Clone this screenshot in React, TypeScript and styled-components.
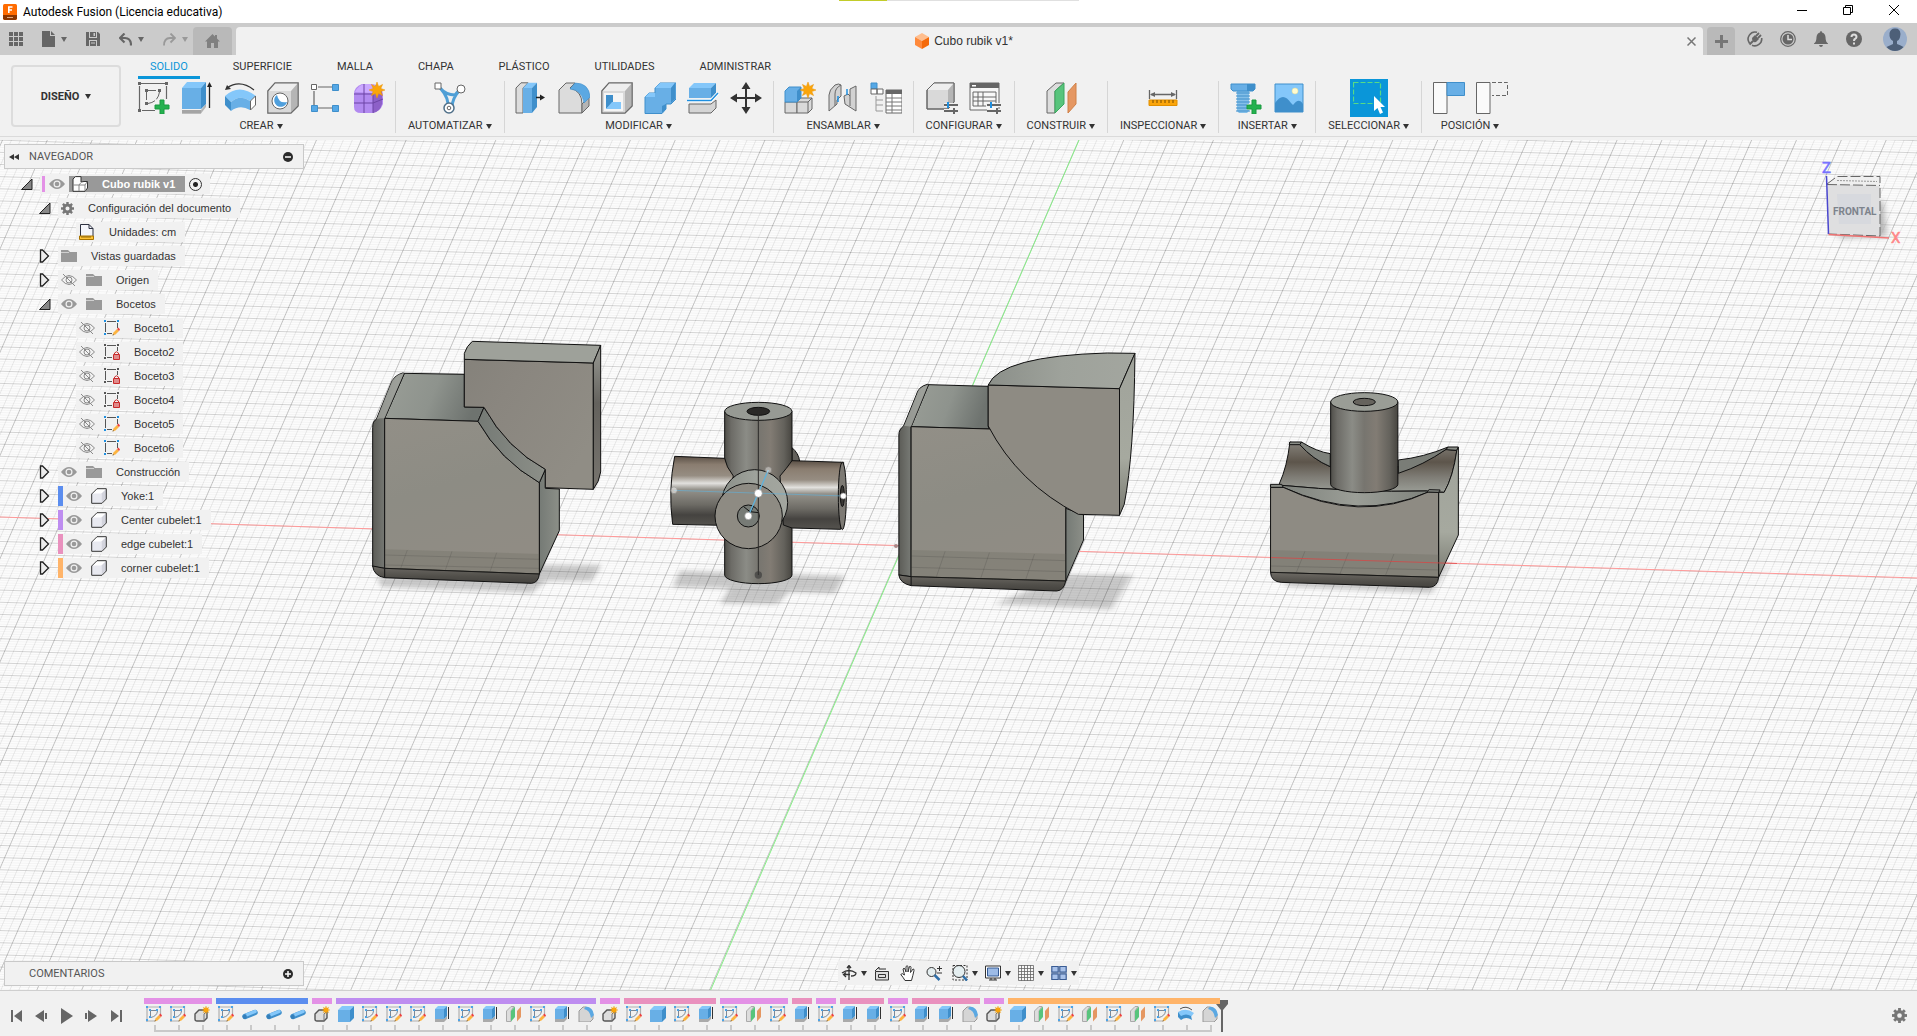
import React from "react";
import styled, { createGlobalStyle, css } from "styled-components";

const GlobalStyle = createGlobalStyle`
  * { box-sizing: border-box; }
  body { margin: 0; background: #f1f1f1; font-family: Roboto, "Liberation Sans", sans-serif; font-size: 11px; color: #333; }
  button, input { font: inherit; color: inherit; margin: 0; }
  button { background: none; border: 0; padding: 0; cursor: pointer; display: inline-flex; align-items: center; justify-content: center; }
  svg { display: block; flex: none; }
  ul { list-style: none; margin: 0; padding: 0; }
`;

const Shell = styled.div`
  display: flex;
  flex-direction: column;
  height: 100vh;
  overflow: hidden;
`;

const Caret = styled.span<{ $tone?: string }>`
  border: 3px solid transparent;
  border-top: 5px solid ${(p) => p.$tone ?? "#333"};
  border-bottom: 0;
  flex: none;
`;

/* ---------- window title bar ---------- */

const TitleBar = styled.header`
  display: grid;
  grid-template-columns: 1fr auto 1fr;
  height: 23px;
  background: #fff;
`;
const AppName = styled.div`
  display: flex;
  align-items: center;
  gap: 6px;
  padding-left: 3px;
  font: 12px Roboto, "Noto Sans", sans-serif;
  color: #000;
`;
const Progress = styled.div`
  display: flex;
  height: 1px;
  width: 240px;
  background: #e0e0e0;
  &::before { content: ""; width: 48px; background: #c2cc2a; }
`;
const WindowButtons = styled.div`
  display: flex;
  justify-content: flex-end;
  button { width: 46px; height: 20px; }
`;

/* ---------- document tab bar ---------- */

const TabBar = styled.nav`
  display: flex;
  height: 32px;
  padding-top: 4px;
  background: #cbcbcb;
`;
const QuickTools = styled.div`
  display: flex;
  align-items: center;
  width: 193px;
  padding: 0 0 4px 9px;
  gap: 19px;
  button { gap: 6px; }
`;
const SquareTab = styled.button<{ $wide?: boolean }>`
  width: ${(p) => (p.$wide ? 39 : 28)}px;
  border-radius: 4px 4px 0 0;
  background: #b9b9b9;
`;
const DocTab = styled.div`
  flex: 1;
  display: flex;
  align-items: center;
  margin: 0 4px;
  padding-right: 4px;
  border-radius: 4px 4px 0 0;
  background: #f1f1f1;
`;
const DocTitle = styled.div`
  flex: 1;
  display: flex;
  align-items: center;
  justify-content: center;
  gap: 5px;
  padding-left: 9px;
  font: 12px "Liberation Sans", Arial, sans-serif;
`;
const CloseTab = styled.button`
  width: 16px;
  height: 16px;
`;
const AccountTools = styled.div`
  display: flex;
  align-items: center;
  width: 182px;
  padding: 0 0 4px 3px;
  button { width: 33px; }
  button:last-child { width: 37px; justify-content: flex-end; }
`;

/* ---------- ribbon ---------- */

const Ribbon = styled.section`
  display: flex;
  gap: 6px;
  height: 82px;
  padding-left: 11px;
  border-bottom: 1px solid #dadada;
  background: #f1f1f1;
`;
const Workspace = styled.button`
  align-self: flex-start;
  width: 110px;
  height: 62px;
  margin-top: 10px;
  gap: 6px;
  border: 2px solid #dcdcdc;
  border-radius: 4px;
  font-weight: 700;
`;
const RibbonBody = styled.div`
  flex: 1;
`;
const RibbonTabs = styled.div`
  display: flex;
  gap: 21px;
  height: 24px;
  padding-left: 11px;
`;
const RibbonTab = styled.button<{ $active?: boolean }>`
  padding: 2px 12px 0;
  border-bottom: 3px solid ${(p) => (p.$active ? "#0a96d9" : "transparent")};
  color: ${(p) => (p.$active ? "#0a96d9" : "#333")};
`;
const Tools = styled.div`
  display: flex;
  padding-top: 2px;
`;
const Group = styled.div`
  display: flex;
  flex-direction: column;
  align-items: center;
  height: 52px;
  padding: 0 5px;
  border-right: 1px solid #d6d6d6;
  &:last-child { border-right: 0; }
`;
const IconRow = styled.div`
  display: flex;
`;
const Tool = styled.button`
  width: 43px;
  height: 34px;
`;
const SelectedTool = styled.span`
  flex: none;
  width: 38px;
  height: 38px;
  padding: 3px;
  background: #0a96d9;
`;
const GroupLabel = styled.button`
  gap: 3px;
  padding: 0 7px;
  line-height: 22px;
  white-space: nowrap;
`;

/* ---------- canvas ---------- */

const Canvas = styled.main`
  position: relative;
  flex: 1;
  min-height: 0;
  margin-top: 3px;
  background: #fcfcfc;
`;
const SceneSvg = styled.svg`
  position: absolute;
  inset: 0;
  width: 100%;
  height: 100%;
`;
const Overlay = styled.div`
  position: relative;
  display: flex;
  flex-direction: column;
  justify-content: space-between;
  height: 100%;
  padding: 4px;
`;
const OverlayTop = styled.div`
  display: flex;
  justify-content: space-between;
  align-items: flex-start;
`;
const OverlayBottom = styled.div`
  display: grid;
  grid-template-columns: 1fr auto 1fr;
  align-items: start;
`;
const PanelBar = styled.div`
  display: flex;
  align-items: center;
  width: 300px;
  height: 25px;
  padding: 0 10px 0 4px;
  border: 1px solid #c9c9c9;
  background: #f1f1f1;
  color: #555;
`;
const PanelLead = styled.span`
  width: 20px;
`;
const PanelTitle = styled.span`
  flex: 1;
`;
const NavBar = styled.div`
  display: flex;
  align-items: center;
  height: 24px;
  gap: 4px;
  padding-right: 2px;
  background: #f1f1f1;
`;
const NavButton = styled.button<{ $menu?: boolean }>`
  gap: 4px;
  height: 24px;
  padding: 0 ${(p) => (p.$menu ? 0 : 3)}px 0 3px;
`;
const CubeHolder = styled.div`
  margin: 6px 2px 0 0;
`;

/* ---------- browser tree ---------- */

const Tree = styled.ul`
  padding-top: 3px;
  font-family: "Liberation Sans", Arial, sans-serif;
`;
const TreeRow = styled.li<{ $level: number }>`
  display: flex;
  align-items: center;
  height: 24px;
  gap: 7px;
  padding-left: ${(p) => [16, 34, 52][p.$level]}px;
`;
const Toggle = styled.button`
  width: 13px;
  height: 14px;
`;
const ToggleSpace = styled.span`
  width: 13px;
`;
const Chip = styled.div<{ $bar?: string }>`
  display: flex;
  align-items: center;
  gap: 9px;
  height: 20px;
  padding: 0 9px 0 3px;
  background: #f1f1f1;
  ${(p) => p.$bar && css`border-left: 5px solid ${p.$bar};`}
`;
const Label = styled.span`
  padding-left: 5px;
  white-space: nowrap;
`;
const RootChip = styled(Chip)`
  padding: 0 8px 0 2px;
  gap: 4px;
`;
const RootBar = styled.span`
  width: 3px;
  height: 16px;
  background: #e391e6;
`;
const RootName = styled.span`
  display: flex;
  align-items: center;
  height: 16px;
  gap: 14px;
  padding: 0 10px 0 3px;
  background: #999;
  color: #fff;
  font-weight: 700;
  white-space: nowrap;
`;
const ActiveRadio = styled.input`
  appearance: none;
  width: 13px;
  height: 13px;
  border: 1px solid #333;
  border-radius: 50%;
  background: radial-gradient(circle, #222 2px, transparent 3px);
`;

/* ---------- timeline ---------- */

const Timeline = styled.footer`
  display: flex;
  height: 46px;
  border-top: 1px solid #cfcfcf;
  background: #f1f1f1;
`;
const Playback = styled.div`
  display: flex;
  align-items: center;
  width: 144px;
  padding: 4px 0 0 4px;
  button { width: 25px; height: 24px; }
`;
const Track = styled.div`
  display: flex;
  padding-top: 7px;
`;
const Span = styled.div<{ $color: string }>`
  display: flex;
  align-items: flex-start;
  position: relative;
  padding-top: 8px;
  &::before {
    content: "";
    position: absolute;
    top: 0;
    left: 0;
    right: 4px;
    height: 6px;
    background: ${(p) => p.$color};
  }
`;
const FeatureButton = styled.button<{ $first?: boolean; $last?: boolean }>`
  align-items: flex-start;
  justify-content: flex-start;
  width: 24px;
  height: 26px;
  padding-left: 2px;
  background:
    linear-gradient(#c9c9c9, #c9c9c9) 10px 19px / 2px 5px no-repeat,
    linear-gradient(#c9c9c9, #c9c9c9) ${(p) => (p.$first ? "10px" : "0")} 24px / ${(p) => (p.$last ? "12px" : "24px")} 2px no-repeat;
`;
const Marker = styled.div`
  margin-left: -8px;
  padding-top: 2px;
`;
const TimelineSettings = styled.button`
  margin-left: auto;
  width: 36px;
  padding-top: 4px;
`;

/* ---------- ribbon icons (32 x 32) ---------- */

const B = "#68afe6";
const BL = "#84c7fa";
const BD = "#3f8fcb";
const G = "#666";

const Star = ({ x, y, s = 1 }: { x: number; y: number; s?: number }) => (
  <path
    transform={`translate(${x} ${y}) scale(${s})`}
    d="M0-8L1.6-3.6L5.6-5.6L3.8-1.6L8 0L3.8 1.6L5.6 5.6L1.6 3.6L0 8L-1.6 3.6L-5.6 5.6L-3.8 1.6L-8 0L-3.8-1.6L-5.6-5.6L-1.6-3.6Z"
    fill="#fba50a"
    stroke="#e8940a"
    strokeWidth=".5"
  />
);
const Plus = ({ x, y }: { x: number; y: number }) => (
  <path transform={`translate(${x} ${y})`} d="M-2-7H2V-2H7V2H2V7H-2V2H-7V-2H-2Z" fill="#25b14f" stroke="#1a9a41" />
);
const GrayCube = () => (
  <>
    <path d="M1 9L8 1H31L24 9Z" fill="#eee" />
    <path d="M24 9L31 1V24L24 31Z" fill="#b5b5b5" />
    <path d="M1 9H24V31H1Z" fill="#d9d9d9" />
    <path d="M.8 9L8 .8H31.2V24L24 31.2H.8Z" fill="none" stroke={G} strokeWidth="1.2" />
  </>
);

const icons32: Record<string, React.ReactNode> = {
  sketch: (
    <>
      <path d="M3 1.5H28M1.5 4V28M28.5 4V17M4 28.5H17" stroke={G} strokeWidth="1.2" fill="none" />
      <path d="M0 0h3v3H0zM27 0h3v3h-3zM0 27h3v3H0zM7 7h3v3H7zM20 7h3v3h-3zM7 20h3v3H7z" fill={G} />
      <path d="M10 8.5H20M8.500 10V20M21.500 10Q20 20 10 21.500" stroke={G} fill="none" strokeDasharray="8 2" />
      <Plus x={24} y={25} />
    </>
  ),
  extrude: (
    <>
      <path d="M1 28H20L25 22V25L20 31.500H1Z" fill="#b5b5b5" />
      <path d="M1 28H20V31.500H1Z" fill="#a5a5a5" />
      <path d="M1 6L6 0H25L20 6Z" fill={BL} />
      <path d="M20 6L25 0V22L20 27Z" fill={BD} />
      <path d="M1 6H20V27H1Z" fill={B} />
      <path d="M28.500 26V3" stroke="#222" strokeWidth="1.300" />
      <path d="M28.500 0L31 5H26Z" fill="#222" />
    </>
  ),
  revolve: (
    <>
      <path d="M3 6Q16-3 30 8" stroke="#333" strokeWidth="1.200" fill="none" />
      <path d="M1 8L3 3L7 7Z" fill="#333" />
      <path d="M1 14Q15 1 32 14L26 19Q16 12 7 20Z" fill={BL} />
      <path d="M1 14L7 20V29L1 23Z" fill={BD} />
      <path d="M7 20Q16 12 26 19V28Q16 22 7 29Z" fill={B} />
      <path d="M26.500 19L31.500 14V23L26.500 28Z" fill="#fff" stroke={G} />
    </>
  ),
  hole: (
    <>
      <GrayCube />
      <circle cx="13" cy="19" r="8" fill="#fff" stroke={G} />
      <path d="M10 13A6.500 6.500 0 1 0 20 20Q12 22 10 13Z" fill="#4f9fdc" />
    </>
  ),
  pattern: (
    <>
      <path d="M8 5H22M4 9V23M8 26H22" stroke={G} fill="none" strokeWidth="1.200" />
      <path d="M1.500 2.500h5v5h-5z" fill="#fff" stroke={G} />
      <path d="M22.500 2.500h6v6h-6zM1.500 23.500h6v6h-6zM22.500 23.500h6v6h-6z" fill="#55a8e6" stroke={BD} />
    </>
  ),
  form: (
    <>
      <path d="M1 12Q1 5 9 2H20Q29 4 30 12V22Q27 30 19 31H8Q1 31 1 25Z" fill="#b28af0" />
      <path d="M20 12L29 9V22Q27 30 20 31Z" fill="#8d60c8" />
      <path d="M2 10Q6 2 13 2H20L25 6L19 11Z" fill="#cba8ff" />
      <path d="M11 2V31M20 11V31M1 21H20L30 17M1 12H20L28 7" stroke="#6d45a5" fill="none" />
      <Star x={24} y={8} />
    </>
  ),
  automate: (
    <>
      <path d="M6 6Q12 13 21 13L26 7M7 7Q15 16 14 26M26 8Q18 16 18 26" stroke="#4f9fd6" strokeWidth="3" fill="none" />
      <path d="M1 1h6v6H1z" fill="#fff" stroke={G} />
      <circle cx="27" cy="7" r="4" fill="#fff" stroke={G} />
      <circle cx="15" cy="26" r="5" fill="#fff" stroke="#4f6f88" strokeWidth="1.500" />
      <circle cx="15" cy="26" r="1.800" fill="#fff" stroke={G} />
    </>
  ),
  pressPull: (
    <>
      <path d="M1 6L6 .8H13L8 6V31H1Z" fill="#ddd" stroke={G} />
      <path d="M8 6L13 .8H22L17 6Z" fill={BL} />
      <path d="M17 6L22 .8V25L17 31Z" fill={BD} />
      <path d="M8 6H17V31H8Z" fill={B} />
      <path d="M21 15.500H27" stroke="#222" strokeWidth="1.500" />
      <path d="M25 12.500L30 15.500L25 18.500Z" fill="#222" />
    </>
  ),
  fillet: (
    <>
      <path d="M1 8L8 1H17L12 6Q24 9 24 22V31H1Z" fill="#dcdcdc" stroke={G} />
      <path d="M24 22L31 15V24L24 31Z" fill="#b5b5b5" stroke={G} />
      <path d="M12 7L17 1Q31 1 32 15L26 21Q24 8 12 7Z" fill="#5ba8e2" stroke={BD} strokeWidth=".600" />
    </>
  ),
  shell: (
    <>
      <GrayCube />
      <path d="M3 11h19v18H3z" fill="#f5f5f5" />
      <path d="M5 13h7v8l-7 6z" fill={BD} />
      <path d="M5 27l6-7h9v7z" fill={BL} />
    </>
  ),
  combine: (
    <>
      <path d="M1 15L5 11H11V6L16 1H32V17L27 22H22V27L18 31.500H1Z" fill={B} stroke={BD} />
      <path d="M11 6L16 1H31L27 6ZM1 15L5 11H11V15Z" fill={BL} />
      <path d="M27 6L31 1V17L27 21ZM18 31V24L22 22V27Z" fill={BD} />
    </>
  ),
  split: (
    <>
      <path d="M2 22H24L29 18V26L24 31H2Z" fill="#d5d5d5" stroke={G} />
      <path d="M2 6L7 1H29L24 6Z" fill={BL} />
      <path d="M24 6L29 1V11L24 16Z" fill={BD} />
      <path d="M2 6H24V16H2Z" fill={B} />
      <path d="M0 18.500H24L31 11" stroke="#fff" strokeWidth="3" fill="none" />
      <path d="M0 18.500H24L31 11" stroke="#1e8fe0" strokeWidth="1.400" fill="none" />
    </>
  ),
  move: (
    <>
      <path d="M16 5V27M5 16H27" stroke="#333" strokeWidth="2" />
      <path d="M16 0L20.500 7H11.500ZM16 32L20.500 25H11.500ZM0 16L7 11.500V20.500ZM32 16L25 11.500V20.500Z" fill="#333" />
    </>
  ),
  component: (
    <>
      <path d="M1 20H13V31H1Z" fill="#d9d9d9" stroke={G} />
      <path d="M13 20L17 16H28V27L24 31H13Z" fill="#d9d9d9" stroke={G} />
      <path d="M13 20H24L28 16M24 20V31" stroke={G} fill="none" />
      <path d="M1 9L5 5H17V16L13 20H1Z" fill={B} stroke={BD} />
      <path d="M13 9L17 5V16L13 20Z" fill={BD} />
      <Star x={24} y={8} />
    </>
  ),
  joint: (
    <>
      <path d="M2 29V13Q2 8 8 3Q12 1 14 3V14L10 18V22Z" fill="#d2d2d2" stroke={G} />
      <path d="M8 24V12Q8 6 14 3" stroke={G} fill="none" />
      <path d="M17 14L21 12L23 14V7L29 4V29L18 22Z" fill="#d2d2d2" stroke={G} />
      <path d="M23 14V24" stroke={G} />
      <path d="M11 14V20M20 7V13" stroke="#1e8fe0" strokeWidth="1.500" />
    </>
  ),
  bom: (
    <>
      <path d="M1 1h6v6H1z" fill="#55a8e6" stroke={BD} />
      <path d="M1 7h6v5H1zM7 7h6v5H7z" fill="#fff" stroke={G} />
      <path d="M6 14V29M6 18H13M6 23H13M6 29H13" stroke="#999" fill="none" />
      <path d="M16 8h16v23H16z" fill="#fff" stroke={G} />
      <path d="M16 8h16v4H16z" fill="#666" />
      <path d="M16 16H32M16 20H32M16 24H32M16 28H32M22 12V31" stroke="#777" fill="none" />
    </>
  ),
  configure: (
    <>
      <path d="M1 8L8 1H28V20L22 27H1Z" fill="#d9d9d9" stroke={G} />
      <path d="M1 8L8 1H28L22 8Z" fill="#eee" />
      <path d="M22 8L28 1V20L22 27Z" fill="#b5b5b5" />
      <path d="M1 8L8 1H28V20L22 27H1Z" fill="none" stroke={G} />
      <path d="M18 23H32M18 29H32" stroke="#f1f1f1" strokeWidth="4" />
      <path d="M18 23H32M18 29H32M28 26V32" stroke="#666" strokeWidth="2" />
      <path d="M22 20V26" stroke="#1e8fe0" strokeWidth="2" />
    </>
  ),
  configTable: (
    <>
      <path d="M1 1h29v27H1z" fill="#f7f7f7" stroke={G} />
      <path d="M1 1h29v5H1z" fill="#666" />
      <path d="M3 3h4v1.500H3z" fill="#fff" />
      <path d="M4 10h23v14H4zM4 15H27M4 19H27M9 10V24M14 10V24" stroke={G} fill="none" />
      <path d="M17 23H32M18 29H32" stroke="#f1f1f1" strokeWidth="4" />
      <path d="M18 23H32M18 29H32M28 26V32" stroke="#666" strokeWidth="2" />
      <path d="M22 20V26" stroke="#1e8fe0" strokeWidth="2" />
    </>
  ),
  planes: (
    <>
      <path d="M2 9L11 1H19L10 9V31H2Z" fill="#ddd" stroke={G} />
      <path d="M10 9L19 1V22L10 31Z" fill="#58c47c" stroke="#3aa85e" />
      <path d="M23 10L31 1V22L23 31Z" fill="#e59762" stroke="#d08047" />
    </>
  ),
  measure: (
    <>
      <path d="M2.500 8V17M29.500 8V17M4 12.500H28" stroke={G} fill="none" strokeWidth="1.300" />
      <path d="M3 12.500L8 10V15ZM29 12.500L24 10V15Z" fill={G} />
      <path d="M2 18H30V23.500H2Z" fill="#fba50a" stroke="#e08f00" />
      <path d="M6 18v3M10 18v3M14 18v3M18 18v3M22 18v3M26 18v3" stroke="#7a4d00" />
    </>
  ),
  insert: (
    <>
      <path d="M7 8H19V29L17 31H9L7 29Z" fill="#84bfe8" />
      <path d="M6 11H20M6 14H20M6 17H20M6 20H20M6 23H20M6 26H20M6 29H20" stroke={BD} />
      <path d="M1 2H25V7L23 9H3L1 7Z" fill={B} stroke={BD} />
      <path d="M17 2H25V7L23 9H17Z" fill={BD} />
      <path d="M17 25H31M24 18V32" stroke="#f1f1f1" strokeWidth="6" />
      <Plus x={24} y={25} />
    </>
  ),
  picture: (
    <>
      <path d="M2 2h28v28H2z" fill="#84c7fa" />
      <path d="M2 21Q10 9 18 21L20 23Q26 15 30 22V30H2Z" fill={BD} />
      <circle cx="22" cy="9" r="3" fill="#fffbd0" stroke="#e8dd90" strokeWidth=".500" />
      <path d="M2 2h28v28H2z" fill="none" stroke={BD} />
    </>
  ),
  select: (
    <>
      <path d="M.500 .500H27.500V21.500H.500Z" fill="none" stroke="#57db85" strokeDasharray="5 2" strokeWidth="1.200" />
      <path d="M21 14V29L24.500 26L27 32L30 30.500L27.500 25H32Z" fill="#fff" />
    </>
  ),
  capture: (
    <>
      <path d="M.500 .500H14V31.500H.500Z" fill="#fafafa" stroke={G} />
      <path d="M14 .500H31.500V13.500H14Z" fill={B} stroke={BD} />
    </>
  ),
  revert: (
    <>
      <path d="M.500 .500H14V31.500H.500Z" fill="#fafafa" stroke={G} />
      <path d="M16 .500H31.500V13.500H16" fill="none" stroke={G} strokeDasharray="4 2" />
    </>
  ),
};

const Icon32 = ({ name }: { name: string }) => (
  <svg width="32" height="32" viewBox="0 0 32 32">{icons32[name]}</svg>
);

/* ---------- small icons (16 x 16) ---------- */

const Pencil = () => (
  <>
    <path d="M8.500 15.500L9.500 12.500L13 9L15 11L11.500 14.500Z" fill="#fdb441" />
    <path d="M13 9L14.500 7.500L16 9.500L15 11Z" fill="#ee3f3f" />
    <path d="M8.500 15.500L9 14L10 15Z" fill="#555" />
  </>
);
const icons16: Record<string, React.ReactNode> = {
  eye: (
    <>
      <path d="M0 8Q8-2 16 8Q8 18 0 8Z" fill="#999" />
      <circle cx="8" cy="8" r="3.500" fill="#f1f1f1" />
      <circle cx="8" cy="8" r="2.300" fill="#999" />
    </>
  ),
  eyeOff: (
    <>
      <path d="M.500 8Q8-1 15.500 8Q8 17 .500 8Z" fill="none" stroke="#8a8a8a" />
      <circle cx="8" cy="8" r="3" fill="none" stroke="#8a8a8a" />
      <path d="M2 2L14 14" stroke="#8a8a8a" />
    </>
  ),
  folder: (
    <>
      <path d="M0 2H7L9 4H16V14H0Z" fill="#999" />
      <path d="M0 4.500H8" stroke="#d0d0d0" />
    </>
  ),
  doc: (
    <>
      <path d="M1.500 12V.500H10L14 4.500V12" fill="#f4f5fa" stroke="#2c3140" />
      <path d="M10 .500V4.500H14" fill="none" stroke="#2c3140" />
      <path d="M.500 12H14.500V15.500H.500Z" fill="#ffc436" stroke="#a87300" />
      <path d="M3 12v2M5 12v2M7 12v2M9 12v2M11 12v2" stroke="#7a5400" strokeWidth=".800" />
    </>
  ),
  sketchEdit: (
    <>
      <path d="M3 1.500H12M1.500 3V12M13.500 3V8M3 13.500H8" stroke="#555" fill="none" />
      <path d="M0 0h2v2H0zM13 0h2v2h-2zM0 13h2v2H0z" fill="#1e8fe0" />
      <Pencil />
    </>
  ),
  sketchLock: (
    <>
      <path d="M3 1.500H12M1.500 3V12M13.500 3V7M3 13.500H8" stroke="#555" fill="none" />
      <path d="M0 0h2v2H0zM13 0h2v2h-2zM0 13h2v2H0z" fill="#555" />
      <path d="M10.500 11V9Q12.500 6.500 14.500 9V11" fill="none" stroke="#c92a2a" />
      <path d="M9.500 10.500H15.500V15.500H9.500Z" fill="#e08a8a" stroke="#c92a2a" />
    </>
  ),
  body: (
    <>
      <path d="M.700 6Q3 1 6 .700H15.300V11L11 15.300H.700Z" fill="#fff" />
      <path d="M.700 5.500H10.500V15H.700Z" fill="#e8e9f0" />
      <path d="M10.500 5.500L15 1V11L10.500 15Z" fill="#d3d4dd" />
      <path d="M.700 6L6 .700H15.300V11L11 15.300H.700Z" fill="none" stroke="#333" strokeLinejoin="round" />
    </>
  ),
  assembly: (
    <>
      <path d="M1 3L3.500 .600H9V6L12 5.500H15.500V12L13 15.300H1Z" fill="#fff" stroke="#333" />
      <path d="M1 9H7V15M7 9L9 6.500M7 9H13V15M13 9L15 6" stroke="#888" fill="none" />
    </>
  ),
  tlSketch: (
    <>
      <path d="M1 1H15M1 0V16M14.500 0V9M0 15H9" stroke="#b0b0b0" fill="none" strokeWidth="1.200" />
      <path d="M5 4.500H11M4.500 5V11M11.500 5Q11 10 5 11.500" stroke="#7d8896" fill="none" />
      <path d="M0 0h2v2H0zM13 0h2v2h-2zM0 13h2v2H0zM3 3h2v2H3zM10 3h2v2h-2zM3 10h2v2H3z" fill="#49a3e8" />
      <Pencil />
    </>
  ),
  tlNew: (
    <>
      <path d="M1 8L5 4H13V12L10 15H3Q1 15 1 13Z" fill="#ddd" stroke="#555" strokeWidth="1.400" />
      <path d="M10 8V15M10 8L13 5" stroke="#777" fill="none" />
      <Star x={12} y={4} s={0.5} />
    </>
  ),
  tlPipe: (
    <>
      <path d="M3 10.500L13 6.500" stroke={BD} strokeWidth="5.500" strokeLinecap="round" />
      <path d="M3 9.500L13 5.500" stroke={BL} strokeWidth="3.500" strokeLinecap="round" />
      <ellipse cx="2.800" cy="10.500" rx="2" ry="2.500" fill="#357fba" />
    </>
  ),
  tlBox: (
    <>
      <path d="M0 4L4 0H16L12 4Z" fill={BL} />
      <path d="M12 4L16 0V12L12 16Z" fill={BD} />
      <path d="M0 4H12V16H0Z" fill={B} />
    </>
  ),
  tlExtrude: (
    <>
      <path d="M1 13H10L13 10V13L10 16H1Z" fill="#aaa" />
      <path d="M1 3L4 0H13L10 3Z" fill={BL} />
      <path d="M10 3L13 0V10L10 13Z" fill={BD} />
      <path d="M1 3H10V13H1Z" fill={B} />
      <path d="M14.500 13V1" stroke="#333" />
    </>
  ),
  tlPlane: (
    <>
      <path d="M.500 5L5 .500H8L5 5V15.500H.500Z" fill="#ddd" stroke="#aaa" />
      <path d="M5 5L9 .500V11L5 15.500Z" fill="#58c47c" />
      <path d="M11 5L15 .500V11L11 15.500Z" fill="#e59762" />
    </>
  ),
  tlFillet: (
    <>
      <path d="M1 5L5 1H8L15 9V13L12 16H1Z" fill="#d5d5d5" stroke="#999" />
      <path d="M6 3L8 .500Q15 1 16 9L13 12Q12 4 6 3Z" fill="#5ba8e2" />
    </>
  ),
  tlRevolve: (
    <>
      <path d="M2 3Q8-1 14 4" stroke="#555" fill="none" />
      <path d="M0 6Q8 1 16 7L13 11Q8 8 3 11Z" fill={BL} />
      <path d="M0 6L3 10Q8 7 13 10L14 14Q8 10 3 14L0 11Z" fill={BD} />
    </>
  ),
};
const Icon16 = ({ name }: { name: string }) => (
  <svg width="16" height="16" viewBox="0 0 16 16">{icons16[name]}</svg>
);
const Gear = ({ size, color }: { size: number; color: string }) => (
  <svg width={size} height={size} viewBox="-8 -8 16 16">
    <circle r="4.200" fill="none" stroke={color} strokeWidth="3.400" />
    {[0, 45, 90, 135, 180, 225, 270, 315].map((a) => (
      <rect key={a} x="-1.500" y="-8" width="3" height="3.500" fill={color} transform={`rotate(${a})`} />
    ))}
  </svg>
);

/* ---------- scene ---------- */

const SLANT = 0.4345;
const SLOPE = 0.032;
const ORIGIN = { x: 902.5, y: 546 };

function gridLines(step: number, count: number, skip: boolean, dir: "row" | "col") {
  let d = "";
  for (let i = -count; i <= count; i++) {
    if (skip && i % 5 === 0) continue;
    if (dir === "row") {
      const y = ORIGIN.y + i * step;
      d += `M-200 ${(y - SLOPE * (ORIGIN.x + 200)).toFixed(2)}L2200 ${(y + SLOPE * (2200 - ORIGIN.x)).toFixed(2)}`;
    } else {
      const x = ORIGIN.x + i * step;
      d += `M${(x + SLANT * (ORIGIN.y - 100)).toFixed(2)} 100L${(x - SLANT * (1100 - ORIGIN.y)).toFixed(2)} 1100`;
    }
  }
  return d;
}

const minorRows = gridLines(12.16 / 5, 220, true, "row");
const majorRows = gridLines(12.16, 44, false, "row");
const minorCols = gridLines(44.85 / 5, 150, true, "col");
const majorCols = gridLines(44.85, 30, false, "col");

const edge = { stroke: "#111", strokeWidth: 1, vectorEffect: "non-scaling-stroke" as const, strokeLinejoin: "round" as const };
const Face = ({ d, fill }: { d: string; fill: string }) => <path d={d} fill={fill} {...edge} />;

const Gradient = ({ id, x2 = 0, y2 = 0, stops }: { id: string; x2?: number; y2?: number; stops: [number, string][] }) => (
  <linearGradient id={id} x1="0" y1="0" x2={x2} y2={y2}>
    {stops.map(([o, c]) => (
      <stop key={o} offset={o} stopColor={c} />
    ))}
  </linearGradient>
);

const Scene = () => (
  <SceneSvg viewBox="0 140 1917 850" preserveAspectRatio="xMidYMid slice" role="img" aria-label="Modelo 3D">
    <defs>
      <Gradient id="front" x2={0.3} y2={1} stops={[[0, "#928f87"], [0.5, "#8d8c84"], [1, "#908c84"]]} />
      <Gradient id="top" x2={1} y2={0.2} stops={[[0, "#9a9e97"], [0.55, "#8e938d"], [1, "#6e736f"]]} />
      <Gradient id="plate" x2={1} y2={0.6} stops={[[0, "#85827b"], [0.35, "#8a867f"], [1, "#908d85"]]} />
      <Gradient id="lid" x2={1} stops={[[0, "#8b8f89"], [0.5, "#9ea29b"], [1, "#a3a69f"]]} />
      <Gradient id="strip" x2={1} stops={[[0, "#5c5c57"], [0.35, "#747671"], [0.8, "#8b8e88"], [1, "#82847e"]]} />
      <Gradient id="foot" y2={1} stops={[[0, "#6e6b65"], [0.6, "#514f4a"], [1, "#44423e"]]} />
      <Gradient id="side" x2={1} stops={[[0, "#757a75"], [1, "#8c8f88"]]} />
      <Gradient id="paleSide" y2={1} stops={[[0, "#a0a39b"], [0.65, "#a6a99f"], [1, "#77786f"]]} />
      <Gradient id="thin" y2={1} stops={[[0, "#9a9b95"], [0.4, "#64625d"], [1, "#77746e"]]} />
      <Gradient id="vcyl" x2={1} stops={[[0, "#4f4e49"], [0.1, "#6d6c67"], [0.32, "#8b8c86"], [0.5, "#77756f"], [0.68, "#827c74"], [0.88, "#64625c"], [1, "#474540"]]} />
      <Gradient id="hcyl" y2={1} stops={[[0, "#5b5046"], [0.12, "#8a7d70"], [0.28, "#968d82"], [0.39, "#e2e1de"], [0.48, "#95928b"], [0.7, "#6d6b65"], [0.85, "#454340"], [1, "#55534e"]]} />
      <Gradient id="wing" y2={1} stops={[[0, "#85827b"], [0.4, "#5d554b"], [0.7, "#7f7d76"], [1, "#9b9e97"]]} />
      <Gradient id="dish" x2={1} stops={[[0, "#7e827c"], [0.5, "#9b9e97"], [1, "#7e827c"]]} />
      <filter id="soft" x="-20%" y="-30%" width="140%" height="160%">
        <feGaussianBlur stdDeviation="8" />
      </filter>
    </defs>

    <g fill="none">
      <path d={minorRows} stroke="#000" strokeOpacity=".035" />
      <path d={minorCols} stroke="#000" strokeOpacity=".08" />
      <path d={majorRows} stroke="#000" strokeOpacity=".16" />
      <path d={majorCols} stroke="#000" strokeOpacity=".22" />
      <path d="M1092 110L663 1100" stroke="#86f086" />
      <path d="M0 517L1917 578" stroke="#f99" />
    </g>

    {/* corner cubelet */}
    <g transform="translate(350 320) scale(.33333)">
      <path d="M80 775L560 735L755 735L725 782L590 782L545 818L95 800Z" fill="#000" opacity=".2" filter="url(#soft)" />
      <Face d="M568 488L586 448V505L628 507V632L568 762Z" fill="url(#side)" />
      <Face d="M163 160L343 163V261L402 262L384 304L104 295Z" fill="url(#top)" />
      <Face d="M158 159Q130 166 121 195L79 298Q68 303 68 322V740L104 745V295L163 160Z" fill="url(#strip)" />
      <path d="M158 160Q131 167 121 195L80 298Q90 293 104 295L162 160Z" fill="#a5a8a2" opacity=".7" />
      <Face d="M104 295L384 304Q450 420 568 488V762L104 745Z" fill="url(#front)" />
      <Face d="M68 738L104 745L568 762Q565 788 545 790L104 773Q72 768 68 738Z" fill="url(#foot)" />
      <path d="M104 745V773" {...edge} />
      <Face d="M402 262Q470 385 586 448L568 488Q450 420 384 304Z" fill="url(#side)" />
      <Face d="M343 118L730 129V508L586 503V448Q470 385 402 262L343 261Z" fill="url(#plate)" />
      <Face d="M343 118V100Q350 78 367 64L752 76L730 129Z" fill="#9ea19a" />
      <Face d="M752 76V456Q748 485 730 508V129Z" fill="url(#thin)" />
      <path d="M104 688L568 702V762L104 745Z" fill="#5f6050" opacity=".22" />
      <path d="M172 690L152 745M306 694L286 750M440 698L420 755M104 705L568 718M104 735L568 745" stroke="#333" strokeOpacity=".25" strokeWidth="2" />
    </g>

    {/* yoke */}
    <g transform="translate(350 320) scale(.33333)">
      <path d="M990 752L1485 768L1455 820L1320 815L1280 852L1110 850L1140 805L968 800Z" fill="#000" opacity=".2" filter="url(#soft)" />
      <Face d="M1326 383Q1346 400 1349 424L1326 440Z" fill="#62605b" />
      <Face d="M1124 274V765A101 26 0 0 0 1326 765V274Z" fill="url(#vcyl)" />
      <ellipse cx="1225" cy="274" rx="101" ry="27" fill="#979a94" {...edge} />
      <ellipse cx="1225" cy="274" rx="34" ry="12" fill="#2a2927" {...edge} />
      <Face d="M974 409L1124 415Q1128 440 1150 468L1115 616L968 613Q954 511 974 409Z" fill="url(#hcyl)" />
      <Face d="M1481 427L1326 422Q1310 445 1290 468L1300 615L1326 624L1472 628Z" fill="url(#hcyl)" />
      <ellipse cx="1477" cy="528" rx="12" ry="101" fill="#7d7a74" {...edge} />
      <ellipse cx="1477" cy="528" rx="6" ry="32" fill="#3a3835" {...edge} />
      <ellipse cx="1214" cy="548" rx="99" ry="99" fill="url(#lid)" {...edge} />
      <ellipse cx="1196" cy="588" rx="101" ry="98" fill="#8e8b83" {...edge} />
      <circle cx="1195" cy="588" r="33" fill="#777b76" {...edge} />
      <path d="M1181 560L1200 575L1226 578M1195 588L1212 557" {...edge} fill="none" />
      <path d="M1225 274V765" stroke="#2c2a28" strokeWidth="3" />
      <path d="M972 511L1480 528" stroke="#5fb2dc" strokeOpacity=".6" strokeWidth="3" />
      <path d="M1255 450L1195 588" stroke="#5fb2dc" strokeWidth="4" />
      <g fill="#fff" stroke="#888" strokeWidth="2">
        <circle cx="1225" cy="520" r="12" />
        <circle cx="1195" cy="588" r="11" />
        <circle cx="1480" cy="528" r="9" />
        <circle cx="972" cy="511" r="10" opacity=".5" />
        <circle cx="1255" cy="450" r="10" opacity=".4" />
      </g>
      <circle cx="1225" cy="765" r="11" fill="#333" opacity=".6" />
    </g>

    {/* edge cubelet */}
    <g transform="translate(870 320) scale(.39541 .33333)">
      <path d="M320 850L500 765H665L610 868L310 852Z" fill="#000" opacity=".2" filter="url(#soft)" />
      <Face d="M495 565L540 585V660L495 783Z" fill="url(#side)" />
      <Face d="M148 194L299 199V320L302 327L104 320Z" fill="url(#top)" />
      <Face d="M145 193Q122 200 117 225L85 318Q73 328 73 345V765L104 770V320L148 194Z" fill="url(#strip)" />
      <path d="M145 195Q123 201 118 225L86 318Q94 317 104 320L147 195Z" fill="#a5a8a2" opacity=".7" />
      <Face d="M104 320L302 327L495 400V783L104 770Z" fill="url(#front)" />
      <Face d="M73 765L104 770L495 783Q490 812 472 813L104 797Q76 790 73 765Z" fill="url(#foot)" />
      <path d="M104 770V797" {...edge} />
      <Face d="M299 195L631 206V586L527 583Q375 490 299 318Z" fill="#8e8b83" />
      <Face d="M299 195Q330 108 600 99L670 100L631 206Z" fill="url(#lid)" />
      <Face d="M670 100Q668 400 643 553L631 586V206Z" fill="url(#paleSide)" />
      <path d="M104 690L495 702V783L104 770Z" fill="#5f6050" opacity=".22" />
      <path d="M190 694L168 770M302 698L280 775M416 702L394 778M104 708L495 722M104 742L495 755" stroke="#333" strokeOpacity=".25" strokeWidth="2" />
    </g>
    <circle cx="896" cy="546" r="2" fill="#a88" />

    {/* center cubelet */}
    <g transform="translate(870 320) scale(.39541 .33333)">
      <path d="M1040 785L1470 730L1420 820L1060 800Z" fill="#000" opacity=".2" filter="url(#soft)" />
      <Face d="M1062 366L1087 374Q1120 418 1164 440H1336Q1400 435 1457 388L1484 392Q1475 470 1452 517L1408 513Q1230 518 1041 496L1035 492Q1055 440 1062 366Z" fill="url(#wing)" />
      <Face d="M1087 374L1091 366Q1130 395 1164 401V440Q1120 418 1087 374Z" fill="#7e817b" />
      <Face d="M1336 420Q1400 412 1462 381L1457 388Q1400 435 1336 460Z" fill="#7a7d77" />
      <Face d="M1062 366H1091L1087 374H1060Z" fill="#8a8d87" />
      <Face d="M1462 381H1488L1484 391L1457 389Z" fill="#8a8d87" />
      <Face d="M1488 382V645L1438 772V517H1452Q1475 470 1484 391Z" fill="url(#paleSide)" />
      <Face d="M1041 496Q1230 518 1408 513L1412 516Q1240 607 1045 502Z" fill="url(#dish)" />
      <Face d="M1165 246V493A85 25 0 0 0 1335 493V246Z" fill="url(#vcyl)" />
      <ellipse cx="1250" cy="246" rx="85" ry="28" fill="#9a9d96" {...edge} />
      <ellipse cx="1250" cy="246" rx="28" ry="11" fill="#66635d" {...edge} />
      <Face d="M1013 502L1045 502Q1240 612 1412 516L1438 517V772L1013 757Z" fill="#8e8b83" />
      <Face d="M1013 493H1041L1045 502H1013Z" fill="#8a8d87" />
      <Face d="M1414 509L1442 510L1438 517L1408 516Z" fill="#8a8d87" />
      <Face d="M1013 757L1438 772Q1436 800 1415 802L1040 787Q1014 785 1013 757Z" fill="url(#foot)" />
      <path d="M1013 690L1438 704V772L1013 757Z" fill="#5f6050" opacity=".22" />
      <path d="M1100 694L1078 758M1210 698L1188 763M1325 702L1303 768M1013 738L1438 750" stroke="#333" strokeOpacity=".25" strokeWidth="2" />
    </g>
    <path d="M1271 557.500L1457 563.500" stroke="#e04040" strokeOpacity=".7" />
  </SceneSvg>
);

const ViewCube = () => (
  <svg width="100" height="100" viewBox="0 0 100 100" role="img" aria-label="Cubo de vista: frontal">
    <defs>
      <filter id="cubeShadow" x="-30%" y="-30%" width="160%" height="160%">
        <feGaussianBlur stdDeviation="3" />
      </filter>
    </defs>
    <path d="M20 76L72 50L76 86L30 88Z" fill="#999" opacity=".7" filter="url(#cubeShadow)" />
    <path d="M16 35L26 27H69V86L17 84Z" fill="#dfdfe0" />
    <path d="M16 34L26 26H69L68 36Z" fill="#efefef" />
    <path d="M26 44H60V74H28Z" fill="#cfd3dc" opacity=".5" />
    <path d="M16 34L26 26.500H69V36M16 34.500L69 35.500M69 38V86L18 84" fill="none" stroke="#666" strokeDasharray="10 3" />
    <path d="M26 30.500L66 31.500" stroke="#999" strokeDasharray="2 1" />
    <path d="M15.500 26L17.500 84" stroke="#4a47cf" strokeWidth="1.500" />
    <path d="M17.500 84.500L78 88" stroke="#f07474" strokeWidth="1.500" />
    <text x="22" y="65" fontSize="10" fontWeight="700" fill="#7d838c" fontFamily="Roboto, sans-serif">FRONTAL</text>
    <text x="11" y="23" fontSize="15" fill="#7773ff" stroke="#7773ff" strokeWidth=".500" fontFamily="Roboto, sans-serif">Z</text>
    <text x="80" y="93" fontSize="15" fill="#f88" stroke="#f88" strokeWidth=".500" fontFamily="Roboto, sans-serif">X</text>
  </svg>
);

/* ---------- data ---------- */

const ribbonTabs = ["SOLIDO", "SUPERFICIE", "MALLA", "CHAPA", "PLÁSTICO", "UTILIDADES", "ADMINISTRAR"];
const ribbonGroups = [
  { label: "CREAR", tools: ["sketch", "extrude", "revolve", "hole", "pattern", "form"] },
  { label: "AUTOMATIZAR", tools: ["automate"] },
  { label: "MODIFICAR", tools: ["pressPull", "fillet", "shell", "combine", "split", "move"] },
  { label: "ENSAMBLAR", tools: ["component", "joint", "bom"] },
  { label: "CONFIGURAR", tools: ["configure", "configTable"] },
  { label: "CONSTRUIR", tools: ["planes"] },
  { label: "INSPECCIONAR", tools: ["measure"] },
  { label: "INSERTAR", tools: ["insert", "picture"] },
  { label: "SELECCIONAR", tools: ["select"] },
  { label: "POSICIÓN", tools: ["capture", "revert"] },
];

type Node = { level: 1 | 2; label: string; icons: string[]; open?: boolean; bar?: string };
const nodes: Node[] = [
  { level: 1, label: "Configuración del documento", icons: ["gear"], open: true },
  { level: 2, label: "Unidades: cm", icons: ["doc"] },
  { level: 1, label: "Vistas guardadas", icons: ["folder"] },
  { level: 1, label: "Origen", icons: ["eyeOff", "folder"] },
  { level: 1, label: "Bocetos", icons: ["eye", "folder"], open: true },
  { level: 2, label: "Boceto1", icons: ["eyeOff", "sketchEdit"] },
  { level: 2, label: "Boceto2", icons: ["eyeOff", "sketchLock"] },
  { level: 2, label: "Boceto3", icons: ["eyeOff", "sketchLock"] },
  { level: 2, label: "Boceto4", icons: ["eyeOff", "sketchLock"] },
  { level: 2, label: "Boceto5", icons: ["eyeOff", "sketchEdit"] },
  { level: 2, label: "Boceto6", icons: ["eyeOff", "sketchEdit"] },
  { level: 1, label: "Construcción", icons: ["eye", "folder"] },
  { level: 1, label: "Yoke:1", icons: ["eye", "body"], bar: "#5b8def" },
  { level: 1, label: "Center cubelet:1", icons: ["eye", "body"], bar: "#be8df0" },
  { level: 1, label: "edge cubelet:1", icons: ["eye", "body"], bar: "#e991be" },
  { level: 1, label: "corner cubelet:1", icons: ["eye", "body"], bar: "#ffb469" },
];

const VIOLET = "#e391e6";
const PINK = "#e991be";
const S = "tlSketch", N = "tlNew", P = "tlPipe", X = "tlBox", E = "tlExtrude", L = "tlPlane", F = "tlFillet", R = "tlRevolve";
const timeline: { color: string; items: string[] }[] = [
  { color: VIOLET, items: [S, S, N] },
  { color: "#5b8def", items: [S, P, P, P] },
  { color: VIOLET, items: [N] },
  { color: "#be8df0", items: [X, S, S, S, E, S, E, L, S, E, F] },
  { color: VIOLET, items: [N] },
  { color: PINK, items: [S, X, S, E] },
  { color: VIOLET, items: [S, L, S] },
  { color: PINK, items: [E] },
  { color: VIOLET, items: [S] },
  { color: PINK, items: [E, E] },
  { color: VIOLET, items: [S] },
  { color: PINK, items: [E, E, F] },
  { color: VIOLET, items: [N] },
  { color: "#ffb469", items: [X, L, S, L, S, L, S, R, F] },
];

const playback: [string, string][] = [
  ["Ir al inicio", "M1 1H3V13H1ZM12 1V13L4 7Z"],
  ["Paso atrás", "M0 7L9 1V13ZM10 4H12V10H10Z"],
  ["Reproducir", "M1 -1L13 7L1 15Z"],
  ["Paso adelante", "M0 4H2V10H0ZM3 1V13L12 7Z"],
  ["Ir al final", "M1 1V13L9 7ZM10 1H12V13H10Z"],
];

const navTools: { label: string; menu?: boolean; art: React.ReactNode }[] = [
  {
    label: "Órbita", menu: true,
    art: <path d="M8 1V15M6 3L8 .500L10 3M1 8Q8 3 15 8Q15 11 10 11M3 9.500H9M5 7.500L2.500 9.500L5 12" fill="none" stroke="#333" strokeWidth="1.300" />,
  },
  { label: "Mirar a", art: <path d="M1.500 6.500H14.500V15H1.500ZM4.500 9.500H11.500V12.500H4.500ZM1 6L5 2L5 4H12" fill="#ddd" stroke="#333" /> },
  { label: "Encuadre", art: <path d="M5 15.500Q3 12 .800 9.500Q2 7.500 4.500 10L3 4Q4 2.500 5 4L6 7L6 1.500Q7.200 0 8 1.500V7L9.500 1.500Q11 1 11 2.500L10.500 7.500L13 4Q14.500 4 14 5.500Q13 10 11.500 15.500Z" fill="#fff" stroke="#333" /> },
  { label: "Zoom", art: <><circle cx="5.500" cy="7" r="4.500" fill="#e4eef0" stroke="#333" /><path d="M8.500 10L13.500 15" stroke="#2d6ea8" strokeWidth="2.500" /><path d="M11 3.500H16M13.500 1V6M11 8H16" stroke="#333" /></> },
  { label: "Ajustar", menu: true, art: <><path d="M1 .500H15V15H1Z" fill="none" stroke="#333" strokeDasharray="2 1.500" /><circle cx="7" cy="6.500" r="6" fill="#e4eef0" stroke="#333" /><path d="M11 11L15 15.500" stroke="#2d6ea8" strokeWidth="2.500" /></> },
  { label: "Visualización", menu: true, art: <><path d="M.500 1H15.500V13H.500Z" fill="#fff" stroke="#333" /><path d="M2.500 3H13.500V11H2.500Z" fill="#9dbbe6" stroke="#345a94" /><path d="M4 15H12M6 13V15M10 13V15" stroke="#333" /></> },
  { label: "Rejilla", menu: true, art: <path d="M.500 .500H15.500V15.500H.500ZM3.500 0V16M6.500 0V16M9.500 0V16M12.500 0V16M0 3.500H16M0 6.500H16M0 9.500H16M0 12.500H16" fill="#f7f7f7" stroke="#666" strokeWidth=".800" /> },
  { label: "Vistas", menu: true, art: <path d="M.800 1.500H7.200V7.200H.800ZM8.800 1.500H15.200V7.200H8.800ZM.800 8.800H7.200V14.500H.800ZM8.800 8.800H15.200V14.500H8.800Z" fill="#a9c2ea" stroke="#3a5c94" strokeWidth="1.200" /> },
];

const OpenArrow = () => (
  <svg width="12" height="12" viewBox="0 0 12 12">
    <path d="M.500 11.500H11V1Z" fill="#888" stroke="#222" />
  </svg>
);
const ClosedArrow = () => (
  <svg width="11" height="14" viewBox="0 0 11 14">
    <path d="M1.500 1V13H3.500L9.500 7L3.500 1Z" fill="#ececec" stroke="#222" strokeWidth="1.300" />
  </svg>
);
const RoundSign = ({ plus }: { plus?: boolean }) => (
  <svg width="10" height="10" viewBox="0 0 10 10">
    <circle cx="5" cy="5" r="5" fill="#2b2b2b" />
    <path d={plus ? "M2 5H8M5 2V8" : "M2 5H8"} stroke="#fff" strokeWidth="1.500" />
  </svg>
);

export default function App() {
  return (
    <Shell>
      <GlobalStyle />
      <TitleBar>
        <AppName>
          <svg width="14" height="16" viewBox="0 0 14 16">
            <rect width="14" height="16" rx="1.500" fill="#ff6b00" />
            <path d="M0 11H14V14.500L12.500 16H1.500L0 14.500Z" fill="#8a3500" />
            <path d="M5.800 9V3H9.500M5.800 6H9" stroke="#fff" strokeWidth="1.600" fill="none" />
            <path d="M4 13.500H10" stroke="#e0a880" />
          </svg>
          Autodesk Fusion (Licencia educativa)
        </AppName>
        <Progress />
        <WindowButtons>
          <button aria-label="Minimizar"><svg width="10" height="10" viewBox="0 0 10 10"><path d="M0 5.500H10" stroke="#000" /></svg></button>
          <button aria-label="Restaurar"><svg width="10" height="10" viewBox="0 0 10 10"><path d="M.500 2.500H7.500V9.500H.500ZM2.500 2.500V.500H9.500V7.500H7.500" fill="none" stroke="#000" /></svg></button>
          <button aria-label="Cerrar"><svg width="10" height="10" viewBox="0 0 10 10"><path d="M0 0L10 10M10 0L0 10" stroke="#000" /></svg></button>
        </WindowButtons>
      </TitleBar>

      <TabBar>
        <QuickTools>
          <button aria-label="Panel de datos">
            <svg width="14" height="14" viewBox="0 0 14 14"><path d="M0 0h4v4H0zM5 0h4v4H5zM10 0h4v4h-4zM0 5h4v4H0zM5 5h4v4H5zM10 5h4v4h-4zM0 10h4v4H0zM5 10h4v4H5zM10 10h4v4h-4z" fill="#666" /></svg>
          </button>
          <button aria-label="Archivo">
            <svg width="13" height="16" viewBox="0 0 13 16"><path d="M0 0H8V5H13V16H0ZM9 0L13 4H9Z" fill="#666" /></svg>
            <Caret $tone="#666" />
          </button>
          <button aria-label="Guardar">
            <svg width="14" height="14" viewBox="0 0 14 14"><path d="M0 0H3V6H11V0H12L14 2V14H11V8H3V14H0ZM4 0H10V5H4ZM7.500 1V4H9V1ZM4 9H10V14H4ZM5 10.500V11.500H9V10.500Z" fill="#666" fillRule="evenodd" /></svg>
          </button>
          <button aria-label="Deshacer">
            <svg width="13" height="13" viewBox="0 0 13 13"><path d="M5.500 .500L1 5L5.500 9.500M1 5H6Q12 5 12 12.500" fill="none" stroke="#666" strokeWidth="2.200" /></svg>
            <Caret $tone="#666" />
          </button>
          <button aria-label="Rehacer">
            <svg width="13" height="13" viewBox="0 0 13 13"><path d="M7.500 .500L12 5L7.500 9.500M12 5H7Q1 5 1 12.500" fill="none" stroke="#999" strokeWidth="1.800" /></svg>
            <Caret $tone="#999" />
          </button>
        </QuickTools>
        <SquareTab $wide aria-label="Inicio">
          <svg width="15" height="14" viewBox="0 0 15 14"><path d="M7.500 0L10 2.500V1H12V4.500L15 7.500H13V14H9V9H6V14H2V7.500H0Z" fill="#808080" /></svg>
        </SquareTab>
        <DocTab>
          <DocTitle>
            <svg width="14" height="16" viewBox="0 0 14 16">
              <path d="M0 4L7 0L14 4L7 8Z" fill="#ffbe8e" />
              <path d="M0 4L7 8V16L0 12Z" fill="#ff8a3c" />
              <path d="M14 4L7 8V16L14 12Z" fill="#f56a0a" />
            </svg>
            Cubo rubik v1*
          </DocTitle>
          <CloseTab aria-label="Cerrar documento"><svg width="9" height="9" viewBox="0 0 9 9"><path d="M.500 .500L8.500 8.500M8.500 .500L.500 8.500" stroke="#777" strokeWidth="1.500" /></svg></CloseTab>
        </DocTab>
        <SquareTab aria-label="Nuevo diseño">
          <svg width="13" height="13" viewBox="0 0 13 13"><path d="M5 0H8V5H13V8H8V13H5V8H0V5H5Z" fill="#777" /></svg>
        </SquareTab>
        <AccountTools>
          <button aria-label="Extensiones">
            <svg width="16" height="16" viewBox="0 0 16 16">
              <path d="M10 1.300A7 7 0 0 0 2.500 12.200M5 14.200A7 7 0 0 0 14.700 7" fill="none" stroke="#666" strokeWidth="1.600" />
              <path d="M2.500 13.500L6 10" stroke="#666" strokeWidth="2" />
              <path d="M5 7L8 4L12 8L9 11Q5 12 5 7Z" fill="#666" />
              <path d="M9 5L12 2M11 7L14 4" stroke="#666" strokeWidth="1.800" />
            </svg>
          </button>
          <button aria-label="Estado del trabajo">
            <svg width="16" height="16" viewBox="0 0 16 16"><circle cx="8" cy="8" r="7.300" fill="none" stroke="#666" strokeWidth="1.200" /><circle cx="8" cy="8" r="5.500" fill="#666" /><path d="M8 4V8.500H12" stroke="#ddd" fill="none" strokeWidth="1.500" /></svg>
          </button>
          <button aria-label="Notificaciones">
            <svg width="14" height="16" viewBox="0 0 14 16"><path d="M7 0Q8 0 8 1.500Q11 2 11.500 6Q11.500 11 14 12.500V13H0V12.500Q2.500 11 2.500 6Q3 2 6 1.500Q6 0 7 0ZM5 14H9Q8.500 16 7 16Q5.500 16 5 14Z" fill="#666" /></svg>
          </button>
          <button aria-label="Ayuda">
            <svg width="16" height="16" viewBox="0 0 16 16"><circle cx="8" cy="8" r="8" fill="#666" /><path d="M5.500 6Q5.500 3.500 8 3.500Q10.500 3.500 10.500 6Q10.500 7 9 8Q8 8.500 8 10M8 11.500V13.500" stroke="#ddd" strokeWidth="2" fill="none" /></svg>
          </button>
          <button aria-label="Cuenta">
            <svg width="24" height="24" viewBox="0 0 24 24"><circle cx="12" cy="12" r="12" fill="#9aaecb" /><path d="M3.500 20Q8 18 10 17V14Q6 12 6.500 6Q8 1 12 1.500Q17 1 17.500 7Q17 13 14 14V17Q17 18 20.500 20Q17 24 12 24Q7 24 3.500 20Z" fill="#4d5f78" /></svg>
          </button>
        </AccountTools>
      </TabBar>

      <Ribbon>
        <Workspace>DISEÑO<Caret /></Workspace>
        <RibbonBody>
          <RibbonTabs>
            {ribbonTabs.map((t, i) => (
              <RibbonTab key={t} $active={i === 0}>{t}</RibbonTab>
            ))}
          </RibbonTabs>
          <Tools>
            {ribbonGroups.map((g) => (
              <Group key={g.label}>
                <IconRow>
                  {g.tools.map((t) => (
                    <Tool key={t} aria-label={t}>
                      {t === "select" ? <SelectedTool><Icon32 name={t} /></SelectedTool> : <Icon32 name={t} />}
                    </Tool>
                  ))}
                </IconRow>
                <GroupLabel>{g.label}<Caret /></GroupLabel>
              </Group>
            ))}
          </Tools>
        </RibbonBody>
      </Ribbon>

      <Canvas>
        <Scene />
        <Overlay>
          <OverlayTop>
            <div>
              <PanelBar>
                <PanelLead><svg width="10" height="6" viewBox="0 0 10 6"><path d="M5 0V6L0 3ZM10 0V6L5 3Z" fill="#333" /></svg></PanelLead>
                <PanelTitle>NAVEGADOR</PanelTitle>
                <button aria-label="Contraer navegador"><RoundSign /></button>
              </PanelBar>
              <Tree>
                <TreeRow $level={0}>
                  <Toggle aria-label="Contraer"><OpenArrow /></Toggle>
                  <RootChip>
                    <RootBar />
                    <Icon16 name="eye" />
                    <RootName><Icon16 name="assembly" />Cubo rubik v1</RootName>
                    <ActiveRadio type="radio" defaultChecked aria-label="Activar componente" />
                  </RootChip>
                </TreeRow>
                {nodes.map((n) => (
                  <TreeRow key={n.label} $level={n.level}>
                    {n.level === 1 ? (
                      <Toggle aria-label={n.open ? "Contraer" : "Expandir"}>{n.open ? <OpenArrow /> : <ClosedArrow />}</Toggle>
                    ) : (
                      <ToggleSpace />
                    )}
                    <Chip $bar={n.bar}>
                      {n.icons.map((ic) => (ic === "gear" ? <Gear key={ic} size={13} color="#777" /> : <Icon16 key={ic} name={ic} />))}
                      <Label>{n.label}</Label>
                    </Chip>
                  </TreeRow>
                ))}
              </Tree>
            </div>
            <CubeHolder><ViewCube /></CubeHolder>
          </OverlayTop>
          <OverlayBottom>
            <PanelBar>
              <PanelLead />
              <PanelTitle>COMENTARIOS</PanelTitle>
              <button aria-label="Expandir comentarios"><RoundSign plus /></button>
            </PanelBar>
            <NavBar>
              {navTools.map((t) => (
                <NavButton key={t.label} $menu={t.menu} aria-label={t.label}>
                  <svg width="16" height="16" viewBox="0 0 16 16">{t.art}</svg>
                  {t.menu && <Caret />}
                </NavButton>
              ))}
            </NavBar>
          </OverlayBottom>
        </Overlay>
      </Canvas>

      <Timeline>
        <Playback>
          {playback.map(([label, d]) => (
            <button key={label} aria-label={label}>
              <svg width="13" height="14" viewBox="0 0 13 14" overflow="visible"><path d={d} fill="#666" /></svg>
            </button>
          ))}
        </Playback>
        <Track>
          {timeline.map((span, si) => (
            <Span key={si} $color={span.color}>
              {span.items.map((name, i) => (
                <FeatureButton
                  key={i}
                  aria-label={name}
                  $first={si === 0 && i === 0}
                  $last={si === timeline.length - 1 && i === span.items.length - 1}
                >
                  <Icon16 name={name} />
                </FeatureButton>
              ))}
            </Span>
          ))}
          <Marker>
            <svg width="12" height="32" viewBox="0 0 12 32"><path d="M0 0H12V4L7 10V32H5V10L0 4Z" fill="#666" /></svg>
          </Marker>
        </Track>
        <TimelineSettings aria-label="Configuración"><Gear size={15} color="#777" /></TimelineSettings>
      </Timeline>
    </Shell>
  );
}
